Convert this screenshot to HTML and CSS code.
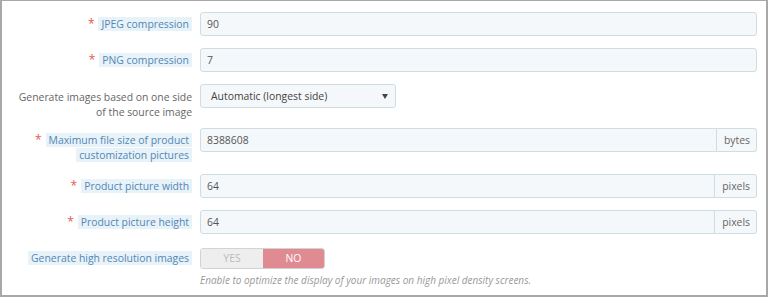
FILE: index.html
```html
<!DOCTYPE html>
<html>
<head>
<meta charset="utf-8">
<link rel="stylesheet" href="styles.css">
</head>
<body>
<div class="frame">
  <div class="row">
    <div class="lab"><span class="req">*</span><span class="tip">JPEG compression</span></div>
    <div class="field"><div class="input">90</div></div>
  </div>
  <div class="row">
    <div class="lab"><span class="req">*</span><span class="tip">PNG compression</span></div>
    <div class="field"><div class="input">7</div></div>
  </div>
  <div class="row row-select">
    <div class="lab plain">Generate images based on one side<br>of the source image</div>
    <div class="field"><div class="select">Automatic (longest side)<span class="caret"></span></div></div>
  </div>
  <div class="row row-two">
    <div class="lab"><span class="req">*</span><span class="tip">Maximum file size of product<br>customization pictures</span></div>
    <div class="field"><div class="group"><div class="input">8388608</div><div class="addon">bytes</div></div></div>
  </div>
  <div class="row">
    <div class="lab"><span class="req">*</span><span class="tip">Product picture width</span></div>
    <div class="field"><div class="group"><div class="input">64</div><div class="addon">pixels</div></div></div>
  </div>
  <div class="row row-six">
    <div class="lab"><span class="req">*</span><span class="tip">Product picture height</span></div>
    <div class="field"><div class="group"><div class="input">64</div><div class="addon">pixels</div></div></div>
  </div>
  <div class="row row-last">
    <div class="lab lab-toggle"><span class="tip">Generate high resolution images</span></div>
    <div class="field">
      <div class="toggle"><span class="yes">YES</span><span class="no">NO</span></div>
      <p class="help">Enable to optimize the display of your images on high pixel density screens.</p>
    </div>
  </div>
</div>
</body>
</html>
```

FILE: styles.css
```css
html, body {
  margin: 0;
  padding: 0;
  background: #ffffff;
}
.frame {
  box-sizing: border-box;
  width: 768px;
  height: 297px;
  border-style: solid;
  border-color: #a8a8a8;
  border-width: 1px 2px 2px 2px;
  padding: 11px 9px 0 0;
  font-family: "Open Sans", "DejaVu Sans", sans-serif;
  font-size: 10.4px;
  color: #555;
  background: #fff;
}
.row {
  display: flex;
  align-items: flex-start;
  margin-bottom: 12px;
}
.row-select { margin-bottom: 8px; }
.row-two { margin-bottom: 11px; }
.row-six { margin-bottom: 14px; }
.lab {
  width: 190px;
  flex: none;
  text-align: right;
  padding-top: 4px;
  line-height: 15px;
}
.lab.plain {
  color: #666;
  padding-top: 6px;
}
.lab-toggle { padding-top: 3px; }
.req {
  color: #e8574f;
  font-size: 12px;
  margin-right: 4px;
}
.tip {
  background: #e7f2f9;
  color: #5487b3;
  padding: 0 3px;
  -webkit-box-decoration-break: clone;
  box-decoration-break: clone;
}
.field {
  flex: 1;
  margin-left: 8px;
}
.input {
  box-sizing: border-box;
  height: 24px;
  line-height: 22px;
  border: 1px solid #cfdde3;
  border-radius: 3px;
  background: #f4f8fa;
  padding: 0 6px;
  color: #555;
}
.select {
  position: relative;
  box-sizing: border-box;
  width: 196px;
  height: 24px;
  line-height: 22px;
  border: 1px solid #cfdde3;
  border-radius: 3px;
  background: #f4f8fa;
  padding: 0 10px;
  color: #444;
}
.caret {
  position: absolute;
  right: 7px;
  top: 9px;
  width: 0;
  height: 0;
  border-left: 3px solid transparent;
  border-right: 3px solid transparent;
  border-top: 5px solid #444;
}
.group {
  display: flex;
}
.group .input {
  flex: 1;
  border-radius: 3px 0 0 3px;
}
.addon {
  box-sizing: border-box;
  height: 24px;
  line-height: 22px;
  border: 1px solid #cfdde3;
  border-left: none;
  border-radius: 0 3px 3px 0;
  background: #f4f8fa;
  padding: 0 6px 0 7px;
  color: #666;
}
.toggle {
  display: flex;
  width: 125px;
  height: 21px;
  box-sizing: border-box;
  border: 1px solid #d3d3d3;
  border-radius: 3px;
  overflow: hidden;
  line-height: 19px;
  text-align: center;
  font-size: 10.4px;
}
.yes {
  width: 62px;
  background: #eeeeee;
  color: #bbbbbb;
}
.no {
  flex: 1;
  background: #e08b91;
  color: #fff;
}
.help {
  margin: 4px 0 0 0;
  font-style: italic;
  font-size: 10px;
  color: #999;
  line-height: 14px;
}
```
